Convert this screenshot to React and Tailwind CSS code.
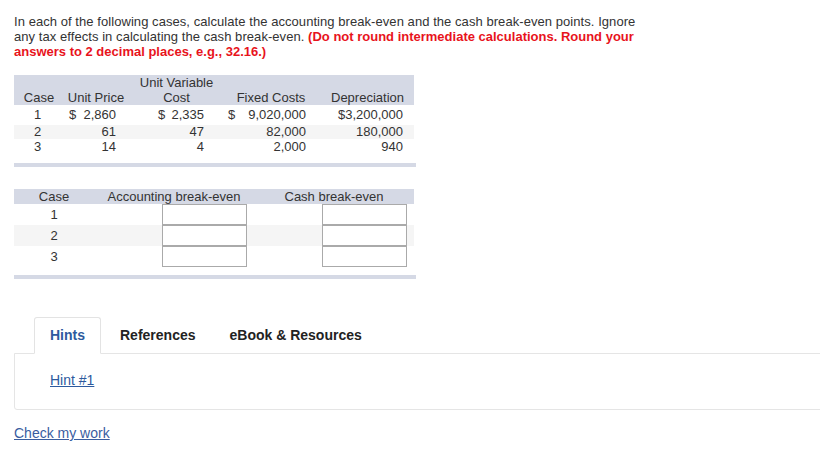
import React from "react";

const HEAD = "bg-[#d5d9e5]";

function Money({ sign, value, pl, pr }) {
  return (
    <div className={`flex justify-between ${pl} ${pr}`}>
      <span>{sign}</span>
      <span>{value}</span>
    </div>
  );
}

export default function App() {
  const cols1 = "grid grid-cols-[50px_64px_97px_92px_97px]";
  const cols2 = "grid grid-cols-[80px_160px_160px]";
  return (
    <div className="w-[820px] h-[473px] overflow-hidden bg-white text-[#333] text-[13px] leading-[15px] font-['Liberation_Sans',Arial,sans-serif]">
      <div className="pl-[14px] pt-[14px]">
        <p className="w-[632px] tracking-[0.06px]">
          In each of the following cases, calculate the accounting break-even and the cash break-even points. Ignore any tax effects in calculating the cash break-even.{" "}
          <span className="font-bold text-[#e8131c] tracking-normal">
            (Do not round intermediate calculations. Round your answers to 2 decimal places, e.g., 32.16.)
          </span>
        </p>

        {/* Table 1 */}
        <div className="mt-[16px] w-[400px]">
          <div className={`${cols1} ${HEAD} h-[30px] items-end`}>
            <div className="text-center">Case</div>
            <div className="text-center">Unit Price</div>
            <div className="text-center">
              <div>Unit Variable</div>
              <div>Cost</div>
            </div>
            <div className="text-center">Fixed Costs</div>
            <div className="text-right pr-[10px]">Depreciation</div>
          </div>
          <div className={`${cols1} h-[20px] pt-[2px]`}>
            <div className="text-center pr-[3px]">1</div>
            <Money sign="$" value="2,860" pl="pl-[5px]" pr="pr-[12px]" />
            <Money sign="$" value="2,335" pl="pl-[30px]" pr="pr-[21px]" />
            <Money sign="$" value="9,020,000" pl="pl-[3px]" pr="pr-[11px]" />
            <div className="text-right pr-[11px]">$3,200,000</div>
          </div>
          <div className={`${cols1} h-[14px] leading-[14px] bg-[#f5f5f5]`}>
            <div className="text-center pr-[3px]">2</div>
            <div className="text-right pr-[12px]">61</div>
            <div className="text-right pr-[21px]">47</div>
            <div className="text-right pr-[11px]">82,000</div>
            <div className="text-right pr-[11px]">180,000</div>
          </div>
          <div className={`${cols1} h-[15px]`}>
            <div className="text-center pr-[3px]">3</div>
            <div className="text-right pr-[12px]">14</div>
            <div className="text-right pr-[21px]">4</div>
            <div className="text-right pr-[11px]">2,000</div>
            <div className="text-right pr-[11px]">940</div>
          </div>
        </div>
        <div className={`mt-[9px] w-[402px] h-[4px] ${HEAD}`} />

        {/* Table 2 */}
        <div className="mt-[22px] w-[400px]">
          <div className={`${cols2} ${HEAD} h-[15px]`}>
            <div className="text-center">Case</div>
            <div className="text-center">Accounting break-even</div>
            <div className="text-center">Cash break-even</div>
          </div>
          {["1", "2", "3"].map((n, i) => (
            <div
              key={n}
              className={`${cols2} h-[21px] items-center ${i === 1 ? "bg-[#f5f5f5]" : ""}`}
            >
              <div className="text-center">{n}</div>
              <div className="pl-[68px]">
                <div className="w-[85px] h-[21px] border border-[#aaaaaa] bg-white" />
              </div>
              <div className="pl-[68px]">
                <div className="w-[85px] h-[21px] border border-[#aaaaaa] bg-white" />
              </div>
            </div>
          ))}
        </div>
        <div className={`mt-[8px] w-[402px] h-[4px] ${HEAD}`} />

        {/* Tabs */}
        <div className="mt-[38px] w-[830px]">
          <div className="flex pl-[20px] gap-[3px] font-bold text-[14px]">
            <div className="relative z-10 -mb-px border border-[#e3e3e3] border-b-white rounded-t-[3px] bg-white px-[15px] pt-[10px] pb-[9px] text-[#2d5a9e]">
              Hints
            </div>
            <div className="border border-transparent px-[15px] pt-[10px] pb-[9px] text-[#222]">
              References
            </div>
            <div className="border border-transparent px-[14px] pt-[10px] pb-[9px] text-[#222]">
              eBook &amp; Resources
            </div>
          </div>
          <div className="border border-[#e5e5e5] rounded-b-[3px] pl-[35px] pt-[19px] pb-[21px] text-[14px]">
            <a className="underline text-[#2d5a9e] cursor-pointer">Hint #1</a>
          </div>
        </div>

        <div className="mt-[16px] text-[14px]">
          <a className="underline text-[#3a5d9f] cursor-pointer">Check my work</a>
        </div>
      </div>
    </div>
  );
}
